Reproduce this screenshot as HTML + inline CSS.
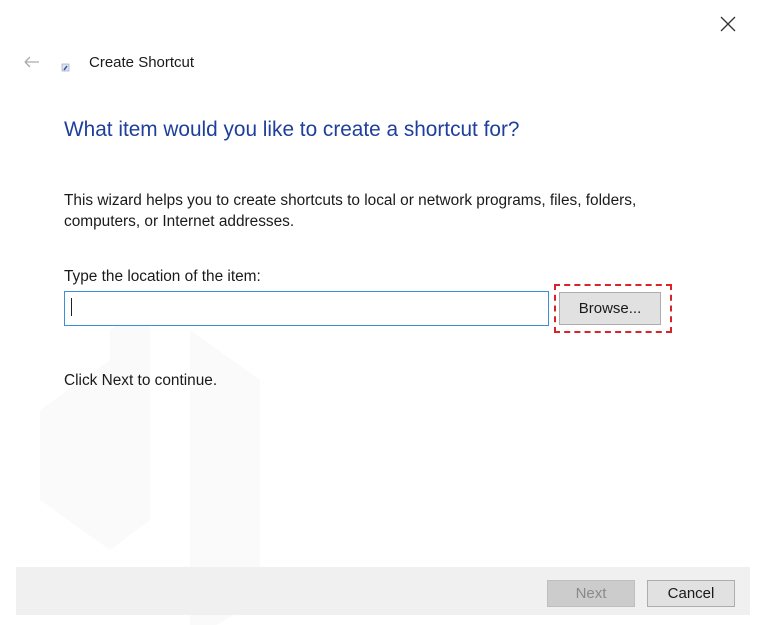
<!DOCTYPE html>
<html><head><meta charset="utf-8"><style>
body{margin:0;width:768px;height:625px;background:#fff;position:relative;overflow:hidden;font-family:"Liberation Sans",sans-serif;color:#1a1a1a}
.a{position:absolute;white-space:nowrap}
</style></head><body>
<svg class="a" style="left:0;top:0" width="768" height="625">
<path d="M40 410 L110 360 L110 330 L150 300 L150 520 L110 550 L40 500 Z" fill="#fafafa"/>
<path d="M190 330 L260 380 L260 600 L190 640 L190 560 Z" fill="#fafafa"/>
<path d="M721 17 L735 31 M735 17 L721 31" stroke="#333" stroke-width="1.3"/>
<path d="M25 62 L39 62 M25 62 L30 57 M25 62 L30 67" stroke="#aaa" stroke-width="1.3" fill="none"/>
<rect x="62" y="64" width="7" height="7" fill="#dde6f2" stroke="#99a" stroke-width="0.6"/>
<path d="M64 70 L67 66" stroke="#2a5aa0" stroke-width="1.5"/>
</svg>
<div class="a" style="left:89px;top:54px;font-size:15px">Create Shortcut</div>
<div class="a" style="left:64px;top:118px;font-size:20.8px;color:#1e3f9c">What item would you like to create a shortcut for?</div>
<div class="a" style="left:64px;top:190px;font-size:15.4px;line-height:21px">This wizard helps you to create shortcuts to local or network programs, files, folders,<br>computers, or Internet addresses.</div>
<div class="a" style="left:64px;top:268px;font-size:15.4px">Type the location of the item:</div>
<div class="a" style="left:64px;top:291px;width:483px;height:33px;border:1px solid #3c8ed8;background:#fff"></div>
<div class="a" style="left:71px;top:298px;width:1px;height:18px;background:#222"></div>
<div class="a" style="left:554px;top:284px;width:114px;height:45px;border:2px dashed #d8232a"></div>
<div class="a" style="left:559px;top:292px;width:100px;height:31px;border:1px solid #adadad;background:#e1e1e1;font-size:15px;text-align:center;line-height:31px">Browse...</div>
<div class="a" style="left:64px;top:372px;font-size:15.4px">Click Next to continue.</div>
<div class="a" style="left:16px;top:567px;width:734px;height:48px;background:#f0f0f0"></div>
<div class="a" style="left:547px;top:580px;width:86px;height:25px;border:1px solid #bfbfbf;background:#cccccc;color:#8a8a8a;font-size:15px;text-align:center;line-height:25px">Next</div>
<div class="a" style="left:647px;top:580px;width:86px;height:25px;border:1px solid #adadad;background:#e1e1e1;font-size:15px;text-align:center;line-height:25px">Cancel</div>
</body></html>
